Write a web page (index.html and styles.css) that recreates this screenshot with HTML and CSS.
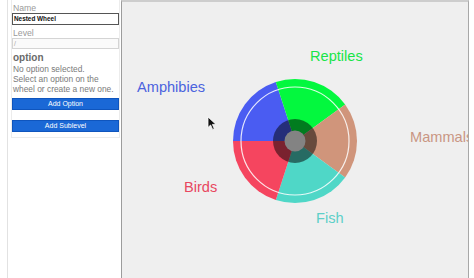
FILE: index.html
```html
<!DOCTYPE html>
<html>
<head>
<meta charset="utf-8">
<link rel="stylesheet" href="styles.css">
</head>
<body>
<div class="app">
  <aside class="sidebar">
    <div class="panel">
      <div class="label">Name</div>
      <div class="input input-dark">Nested Wheel</div>
      <div class="label label-level">Level</div>
      <div class="input input-light">/</div>
      <div class="heading">option</div>
      <p class="info">No option selected.<br>Select an option on the<br>wheel or create a new one.</p>
      <button class="btn">Add Option</button>
      <button class="btn btn-second">Add Sublevel</button>
    </div>
  </aside>
  <main class="canvas">
    <svg class="wheel" width="346" height="276" viewBox="0 0 346 276">
      <g>
        <path d="M173 139 L111 139 A62 62 0 0 1 153.841 80.034 Z" fill="#4a5cf2"/>
        <path d="M173 139 L153.841 80.034 A62 62 0 0 1 223.159 102.557 Z" fill="#03f83e"/>
        <path d="M173 139 L223.159 102.557 A62 62 0 0 1 223.159 175.443 Z" fill="#d0957b"/>
        <path d="M173 139 L223.159 175.443 A62 62 0 0 1 153.841 197.966 Z" fill="#4fd7c7"/>
        <path d="M173 139 L153.841 197.966 A62 62 0 0 1 111 139 Z" fill="#f5455f"/>
      </g>
      <circle cx="173" cy="139" r="54" fill="none" stroke="#ffffff" stroke-opacity="0.85" stroke-width="1.2"/>
      <circle cx="173" cy="139" r="22" fill="#000" fill-opacity="0.5"/>
      <circle cx="173" cy="139" r="10.5" fill="#838383"/>
      <text class="lbl" x="15" y="90" fill="#4b63de">Amphibies</text>
      <text class="lbl" x="188" y="59" fill="#17e548">Reptiles</text>
      <text class="lbl" x="288" y="140" fill="#c99683">Mammals</text>
      <text class="lbl" x="62" y="190" fill="#e8475f">Birds</text>
      <text class="lbl" x="194" y="221" fill="#5dcfc8">Fish</text>
      <path d="M86 115 L86 125.5 L88.6 123 L90.6 127.4 L92.3 126.7 L90.4 122.4 L94 122.4 Z" fill="#111" stroke="#fff" stroke-width="0.8"/>
    </svg>
  </main>
</div>
</body>
</html>
```

FILE: styles.css
```css
html, body {
  margin: 0;
  padding: 0;
  background: #ffffff;
}

body {
  font-family: "Liberation Sans", Arial, sans-serif;
  width: 474px;
  height: 278px;
  overflow: hidden;
}

.app {
  display: flex;
  height: 278px;
}

.sidebar {
  margin-left: 7px;
  width: 109px;
  border-left: 1px solid #e2e2e2;
  padding: 0 1px 0 3px;
  background: #fff;
}

.panel {
  border: 1px solid #ececec;
  border-top: none;
  padding: 3px 0 5px 0;
  display: flex;
  flex-direction: column;
}

.label {
  font-size: 8.7px;
  line-height: 10px;
  color: #9a9a9a;
  padding-left: 1px;
}

.label-level {
  margin-top: 3px;
}

.input {
  box-sizing: border-box;
  height: 12px;
  margin-left: 0;
  padding: 0 1px;
  font-size: 6.4px;
  line-height: 10px;
}

.input-dark {
  border: 1px solid #555;
  font-weight: bold;
  color: #111;
}

.input-light {
  height: 11px;
  border: 1px solid #d4d4d4;
  background: #fafafa;
  color: #aaa;
  font-size: 7px;
  line-height: 9px;
}

.heading {
  margin-top: 3px;
  font-size: 10px;
  line-height: 12px;
  font-weight: bold;
  color: #6a6a6a;
  padding-left: 1px;
}

.info {
  margin: 0;
  font-size: 8.4px;
  line-height: 10px;
  color: #7a7a7a;
  padding-left: 1px;
}

.btn {
  display: block;
  box-sizing: border-box;
  width: 100%;
  height: 12px;
  margin-top: 4px;
  padding: 0;
  border: 1px solid #0f55bd;
  background: #1a68d6;
  color: #fff;
  font-family: "Liberation Sans", Arial, sans-serif;
  font-size: 7px;
  line-height: 10px;
}

.btn-second {
  margin-top: 10px;
}

.canvas {
  width: 346px;
  height: 276px;
  border-left: 1px solid #9c9c9c;
  border-right: 1px solid #a8a8a8;
  border-top: 2px solid #cdcdcd;
  background: #efefef;
  overflow: hidden;
}

.wheel {
  display: block;
}

.lbl {
  font-family: "Liberation Sans", Arial, sans-serif;
  font-size: 14.6px;
}
```
